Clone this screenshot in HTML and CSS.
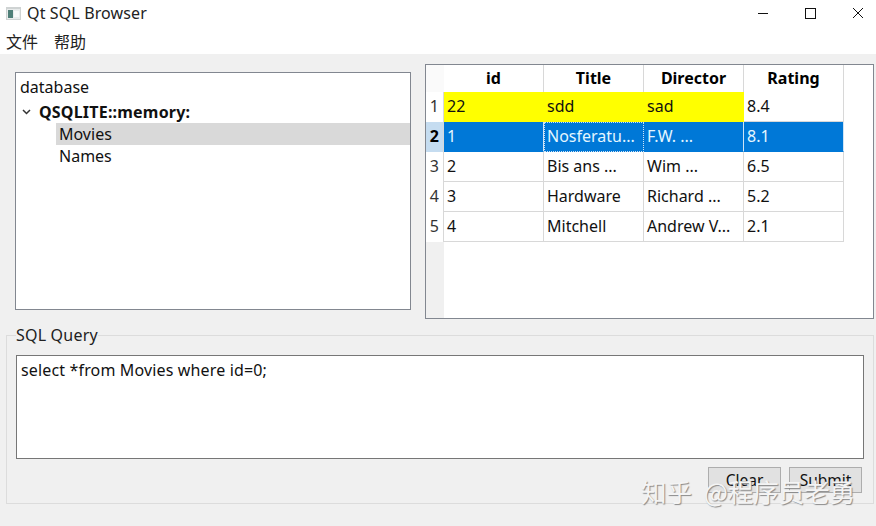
FILE: index.html
```html
<!DOCTYPE html>
<html lang="zh">
<head>
<meta charset="utf-8">
<title>Qt SQL Browser</title>
<link rel="stylesheet" href="styles.css">
</head>
<body>
<div class="window">
  <header class="titlebar">
    <svg class="appicon" width="15" height="13" viewBox="0 0 15 13"><rect x="0" y="0" width="15" height="13" fill="#cfd3d3"/><rect x="1" y="2" width="13" height="10" fill="#e9ecec"/><rect x="2" y="3" width="5" height="8" fill="#4f7f78"/><rect x="8" y="4" width="5" height="6" fill="#f8f9f9"/></svg>
    <span class="title">Qt SQL Browser</span>
    <div class="controls">
      <svg class="ctl" width="47" height="28" viewBox="0 0 47 28"><path d="M18 13.5H28" stroke="#111" fill="none"/></svg>
      <svg class="ctl" width="48" height="28" viewBox="0 0 48 28"><rect x="18.5" y="8.5" width="10" height="10" stroke="#111" fill="none"/></svg>
      <svg class="ctl" width="46" height="28" viewBox="0 0 46 28"><path d="M18 8L28 18M28 8L18 18" stroke="#111" fill="none"/></svg>
    </div>
  </header>
  <nav class="menubar"><span>文件</span><span>帮助</span></nav>
  <main class="content">
    <div class="top">
      <section class="tree">
        <div class="tree-head">database</div>
        <div class="tree-root">
          <svg width="9" height="6" viewBox="0 0 9 6"><path d="M1 1L4.5 4.5L8 1" stroke="#333" stroke-width="1.5" fill="none"/></svg>
          <b>QSQLITE::memory:</b>
        </div>
        <div class="tree-item selected">Movies</div>
        <div class="tree-item">Names</div>
      </section>
      <section class="grid">
        <div class="rowheads">
          <div class="corner"></div>
          <div class="rh">1</div>
          <div class="rh active">2</div>
          <div class="rh">3</div>
          <div class="rh">4</div>
          <div class="rh">5</div>
          <div class="rh-rest"></div>
        </div>
        <div class="cells">
          <div class="row head"><div>id</div><div>Title</div><div>Director</div><div>Rating</div></div>
          <div class="row yellow"><div>22</div><div>sdd</div><div>sad</div><div>8.4</div></div>
          <div class="row blue"><div>1</div><div class="focus">Nosferatu...</div><div>F.W. ...</div><div>8.1</div></div>
          <div class="row"><div>2</div><div>Bis ans ...</div><div>Wim ...</div><div>6.5</div></div>
          <div class="row"><div>3</div><div>Hardware</div><div>Richard ...</div><div>5.2</div></div>
          <div class="row"><div>4</div><div>Mitchell</div><div>Andrew V...</div><div>2.1</div></div>
        </div>
      </section>
    </div>
    <fieldset class="query">
      <legend>SQL Query</legend>
      <div class="editor">select *from Movies where id=0;</div>
      <div class="actions">
        <button class="btn" type="button">Clear</button>
        <button class="btn" type="button">Submit</button>
      </div>
    </fieldset>
  </main>
  <div class="watermark">知乎 @程序员老勇</div>
</div>
</body>
</html>
```
FILE: styles.css
```css
* { box-sizing: border-box; }
html, body { margin: 0; padding: 0; }
body {
  width: 876px;
  height: 526px;
  overflow: hidden;
  font-family: "Noto Sans", "Noto Sans CJK SC", sans-serif;
  font-size: 16px;
  color: #111;
  background: #f0f0f0;
}
.window { position: relative; width: 876px; height: 526px; display: flex; flex-direction: column; }
.titlebar { height: 28px; background: #fff; display: flex; align-items: center; padding-left: 6px; }
.appicon { margin-right: 6px; margin-top: -1px; }
.title { font-size: 16px; line-height: 24px; height: 26px; letter-spacing: 0.13px; color: #222; }
.controls { margin-left: auto; display: flex; margin-right: -5px; }
.ctl { display: block; }
.menubar { height: 26px; background: #fff; display: flex; gap: 16px; padding-left: 6px; font-size: 16px; line-height: 27px; font-family: "Noto Sans CJK SC", sans-serif; color: #222; }
.content { flex: 1; display: flex; flex-direction: column; padding: 10px 2px 22px 6px; }
.top { height: 255px; display: flex; justify-content: space-between; align-items: flex-start; flex: none; }
.tree { width: 396px; height: 238px; margin: 8px 0 0 9px; background: #fff; border: 1px solid #828790; }
.tree-head { height: 27px; padding-left: 4px; line-height: 29px; }
.tree-root { height: 23px; display: flex; align-items: center; gap: 8px; padding-left: 6px; }
.tree-root b { font-weight: 700; letter-spacing: 0.2px; }
.tree-item { height: 22px; margin-left: 40px; padding-left: 3px; line-height: 23px; }
.tree-item.selected { background: #d9d9d9; }
.grid { width: 449px; height: 255px; display: flex; background: #fff; border: 1px solid #828790; }
.rowheads { width: 18px; display: flex; flex-direction: column; background: #f0f0f0; }
.corner { height: 27px; background: #fafafa; }
.rh { height: 30px; background: #fff; text-align: right; padding-right: 4px; line-height: 29px; border-right: 1px solid #d8d8d8; color: #333; }
.rh.active { background: #c5dcf0; font-weight: 700; color: #000; }
.rh-rest { flex: 1; }
.cells { display: flex; flex-direction: column; }
.row { display: grid; grid-template-columns: repeat(4, 100px); height: 30px; }
.row > div { padding-left: 3px; line-height: 29px; border-right: 1px solid #d8d8d8; border-bottom: 1px solid #d8d8d8; white-space: nowrap; overflow: hidden; }
.row.head { height: 27px; font-weight: 700; }
.row.head > div { text-align: center; padding-left: 0; line-height: 27px; border-bottom: 0; color: #000; }
.row.yellow > div { background: #ffff00; border-color: #ffff00; }
.row.yellow > div:nth-child(4) { background: #fff; border-color: #d8d8d8; }
.row.blue > div { background: #0078d7; color: #e4f6ff; border-color: #cfe4f5; border-bottom-color: #0078d7; }
.row.blue > div.focus { border: 1px dotted #cfe4f5; padding-left: 2px; line-height: 27px; }
.query { flex: 1; margin: 6px 0 0 0; width: 868px; padding: 0 9px; border: 1px solid #dcdcdc; min-width: 0; }
.query legend { padding: 0; margin-left: 0; line-height: 21px; letter-spacing: 0.2px; color: #222; }
.editor { height: 104px; margin-top: 9px; background: #fff; border: 1px solid #767676; padding: 2px 4px; line-height: 24px; width: 848px; letter-spacing: 0.15px; }
.actions { display: flex; justify-content: flex-end; gap: 8px; margin-top: 8px; padding-right: 2px; }
.btn { width: 73px; height: 26px; font: inherit; font-size: 15.5px; line-height: 24px; padding: 0; color: #111; background: #e1e1e1; border: 1px solid #adadad; }
.watermark { position: absolute; left: 641px; top: 475px; font-family: "Noto Sans CJK SC", sans-serif; font-size: 25.5px; line-height: 32px; word-spacing: 6px; white-space: nowrap; color: #f4f4f4; text-shadow: 1px 1px 1px #8a8a8a; }
```
